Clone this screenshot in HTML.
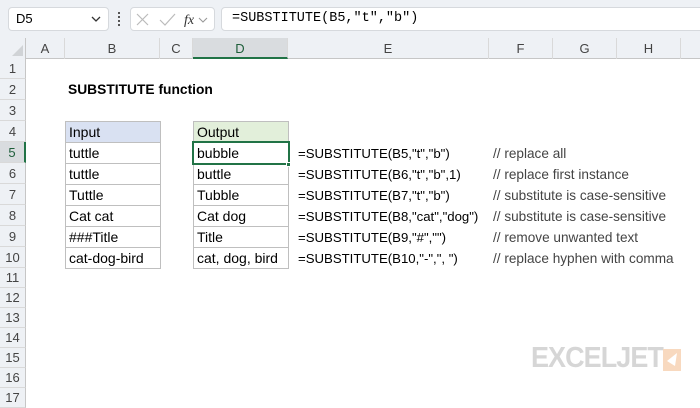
<!DOCTYPE html>
<html><head><style>
*{margin:0;padding:0;box-sizing:border-box}
body{width:700px;height:400px;overflow:hidden;background:#fff;font-family:"Liberation Sans",sans-serif;position:relative;color:#000}
.a{position:absolute;white-space:nowrap}
.top{left:0;top:0;width:700px;height:38px;background:#eef1f5}
.box{background:#fff;border:1px solid #d6d9dd;border-radius:4px}
.hdr{left:0;top:38px;width:700px;height:21px;background:#eef1f5;border-bottom:1px solid #c6c6c6}
.ch{position:absolute;top:38px;height:21px;font-size:13px;color:#444;text-align:center;line-height:21px;border-right:1px solid #d9d9d9}
.rh{position:absolute;left:0;width:26px;background:#eef1f5;font-size:13px;color:#444;text-align:center;border-bottom:1px solid #d9d9d9;border-right:1px solid #c6c6c6}
.c{position:absolute;font-size:14px;padding-left:3px;line-height:20px;border:1px solid #bfbfbf;background:#fff}
.f{position:absolute;font-size:13.2px;line-height:21px}
.m{position:absolute;font-size:13.6px;line-height:21px;color:#444}
</style></head><body>
<div class="a top"></div>
<div class="a box" style="left:8px;top:7px;width:101px;height:24px;font-size:13px;line-height:22px;padding-left:7px">D5</div>
<svg class="a" style="left:91px;top:15px" width="10" height="8"><path d="M1 2 L5 6 L9 2" stroke="#333" stroke-width="1.3" fill="none"/></svg>
<div class="a" style="left:118px;top:12px;width:2px;height:14px;border-left:2px dotted #555"></div>
<div class="a box" style="left:130px;top:7px;width:85px;height:24px"></div>
<svg class="a" style="left:135px;top:12px" width="80" height="16"><path d="M2 2 L13 13 M13 2 L2 13" stroke="#bbb" stroke-width="1.2"/><path d="M25 8 L30 13 L40 2" stroke="#bbb" stroke-width="1.2" fill="none"/><text x="49" y="12" font-family="Liberation Serif" font-style="italic" font-size="14" fill="#333">fx</text><path d="M64 6 L68 10 L72 6" stroke="#999" stroke-width="1.1" fill="none"/></svg>
<div class="a box" style="left:221px;top:7px;width:490px;height:24px;font-family:'Liberation Mono',monospace;font-size:13.5px;line-height:22px;padding-left:10px">=SUBSTITUTE(B5,"t","b")</div>
<div class="a hdr"></div>
<div class="a" style="left:0;top:38px;width:26px;height:21px;background:#eef1f5;border-right:1px solid #c6c6c6"></div>
<svg class="a" style="left:10px;top:45px" width="14" height="12"><path d="M13 0 L13 11 L2 11 Z" fill="#d0d3d6"/></svg>
<div class="ch" style="left:26px;width:39px">A</div>
<div class="ch" style="left:65px;width:95px">B</div>
<div class="ch" style="left:160px;width:33px">C</div>
<div class="ch" style="left:193px;width:95px;background:#d9dcdf;border-bottom:2px solid #217346;color:#1e5e3a">D</div>
<div class="ch" style="left:288px;width:201px">E</div>
<div class="ch" style="left:489px;width:64px">F</div>
<div class="ch" style="left:553px;width:64px">G</div>
<div class="ch" style="left:617px;width:64px">H</div>
<div class="rh" style="top:59px;height:20px;line-height:20px">1</div>
<div class="rh" style="top:79px;height:21px;line-height:21px">2</div>
<div class="rh" style="top:100px;height:21px;line-height:21px">3</div>
<div class="rh" style="top:121px;height:21px;line-height:21px">4</div>
<div class="rh" style="top:142px;height:21px;line-height:21px;background:#d9dcdf;border-right:2px solid #217346;color:#1e5e3a">5</div>
<div class="rh" style="top:163px;height:21px;line-height:21px">6</div>
<div class="rh" style="top:184px;height:21px;line-height:21px">7</div>
<div class="rh" style="top:205px;height:21px;line-height:21px">8</div>
<div class="rh" style="top:226px;height:21px;line-height:21px">9</div>
<div class="rh" style="top:247px;height:21px;line-height:21px">10</div>
<div class="rh" style="top:268px;height:20px;line-height:20px">11</div>
<div class="rh" style="top:288px;height:20px;line-height:20px">12</div>
<div class="rh" style="top:308px;height:20px;line-height:20px">13</div>
<div class="rh" style="top:328px;height:20px;line-height:20px">14</div>
<div class="rh" style="top:348px;height:20px;line-height:20px">15</div>
<div class="rh" style="top:368px;height:20px;line-height:20px">16</div>
<div class="rh" style="top:388px;height:20px;line-height:20px">17</div>
<div class="a" style="left:68px;top:82px;font-size:13.8px;font-weight:bold">SUBSTITUTE function</div>

<div class="c" style="left:65px;top:121px;width:96px;height:22px;background:#d9e1f2">Input</div>
<div class="c" style="left:65px;top:142px;width:96px;height:22px">tuttle</div>
<div class="c" style="left:65px;top:163px;width:96px;height:22px">tuttle</div>
<div class="c" style="left:65px;top:184px;width:96px;height:22px">Tuttle</div>
<div class="c" style="left:65px;top:205px;width:96px;height:22px">Cat cat</div>
<div class="c" style="left:65px;top:226px;width:96px;height:22px">###Title</div>
<div class="c" style="left:65px;top:247px;width:96px;height:22px">cat-dog-bird</div>

<div class="c" style="left:193px;top:121px;width:96px;height:22px;background:#e2efda">Output</div>
<div class="c" style="left:193px;top:142px;width:96px;height:22px">bubble</div>
<div class="c" style="left:193px;top:163px;width:96px;height:22px">buttle</div>
<div class="c" style="left:193px;top:184px;width:96px;height:22px">Tubble</div>
<div class="c" style="left:193px;top:205px;width:96px;height:22px">Cat dog</div>
<div class="c" style="left:193px;top:226px;width:96px;height:22px">Title</div>
<div class="c" style="left:193px;top:247px;width:96px;height:22px">cat, dog, bird</div>
<div class="a" style="left:192px;top:141px;width:98px;height:24px;border:2px solid #217346"></div>
<div class="a" style="left:286px;top:162px;width:5px;height:5px;background:#217346;border:1px solid #fff"></div>

<div class="f" style="left:298px;top:143px">=SUBSTITUTE(B5,"t","b")</div>
<div class="f" style="left:298px;top:164px">=SUBSTITUTE(B6,"t","b",1)</div>
<div class="f" style="left:298px;top:185px">=SUBSTITUTE(B7,"t","b")</div>
<div class="f" style="left:298px;top:206px">=SUBSTITUTE(B8,"cat","dog")</div>
<div class="f" style="left:298px;top:227px">=SUBSTITUTE(B9,"#","")</div>
<div class="f" style="left:298px;top:248px">=SUBSTITUTE(B10,"-",", ")</div>
<div class="m" style="left:493px;top:143px">// replace all</div>
<div class="m" style="left:493px;top:164px">// replace first instance</div>
<div class="m" style="left:493px;top:185px">// substitute is case-sensitive</div>
<div class="m" style="left:491px;top:206px;background:#fff;padding-left:2px">// substitute is case-sensitive</div>
<div class="m" style="left:493px;top:227px">// remove unwanted text</div>
<div class="m" style="left:493px;top:248px">// replace hyphen with comma</div>

<div class="a" style="left:531px;top:342px;font-size:29px;font-weight:bold;color:#d6d6d6;letter-spacing:-1px;transform:scaleX(0.93);transform-origin:left">EXCELJET</div>
<div class="a" style="left:663px;top:349px;width:18px;height:22px;background:#f8d9bf"></div>
<svg class="a" style="left:663px;top:349px" width="18" height="22"><path d="M14 4 L4 12 L12 17 Z" fill="#fff"/></svg>
</body></html>
